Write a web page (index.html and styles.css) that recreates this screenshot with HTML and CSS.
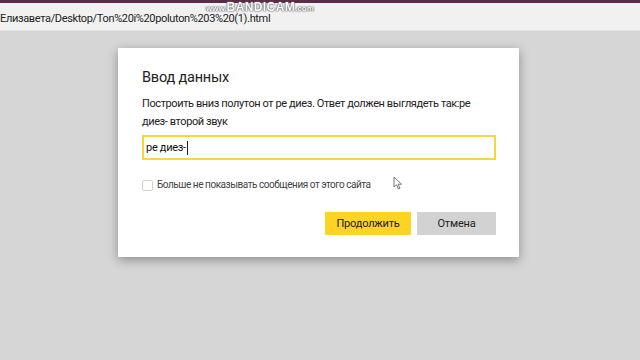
FILE: index.html
```html
<!DOCTYPE html>
<html lang="ru">
<head>
<meta charset="utf-8">
<link rel="stylesheet" href="styles.css">
</head>
<body>
<div class="topstrip"></div>
<div class="addressbar">
  <span class="url">Елизавета/Desktop/Ton%20i%20poluton%203%20(1).html</span>
  <div class="watermark">www.<span class="wm-big">BANDICAM</span>.com</div>
</div>
<main class="page">
  <div class="dialog">
    <h1 class="title">Ввод данных</h1>
    <p class="message">Построить вниз полутон от ре диез. Ответ должен выглядеть так:ре диез- второй звук</p>
    <div class="input">ре диез-<span class="caret"></span></div>
    <label class="check"><span class="box"></span>Больше не показывать сообщения от этого сайта</label>
    <div class="cursor">
      <svg width="10" height="14" viewBox="0 0 10 14"><path d="M1 1 L1 11 L3.5 8.8 L5.5 13 L7 12.3 L5 8.2 L8.5 8.2 Z" fill="#fff" stroke="#777" stroke-width="1"/></svg>
    </div>
    <div class="actions">
      <button class="btn primary">Продолжить</button>
      <button class="btn secondary">Отмена</button>
    </div>
  </div>
</main>
</body>
</html>
```
FILE: styles.css
```css
* { box-sizing: border-box; }
html, body { margin: 0; padding: 0; }
body {
  width: 640px;
  height: 360px;
  overflow: hidden;
  background: #d6d6d6;
  font-family: Roboto, "Noto Sans", sans-serif;
  color: #222;
}
.topstrip {
  height: 3px;
  background: #5b2c48;
}
.addressbar {
  position: relative;
  height: 28px;
  background: #f1f1f1;
  border-bottom: 1px solid #e4e4e4;
  display: flex;
  align-items: center;
}
.url {
  margin-left: 0;
  margin-top: 4px;
  font-size: 11px;
  line-height: 14px;
  letter-spacing: -0.35px;
  color: #222;
  white-space: nowrap;
}
.watermark {
  position: absolute;
  left: 206px;
  top: 0;
  font-family: "Liberation Sans", Arial, sans-serif;
  font-size: 8px;
  line-height: 9px;
  font-weight: 700;
  color: #fff;
  text-shadow: 0 0 1px #555, 0 0 1px #555, 0 0 2px #777;
}
.wm-big { font-size: 12px; font-weight: 900; letter-spacing: 0.4px; }
.page {
  padding: 17px 0 0 118px;
}
.dialog {
  position: relative;
  width: 401px;
  height: 209px;
  background: #fff;
  box-shadow: 0 3px 10px rgba(0,0,0,0.35);
  padding: 20px 23px 0 24px;
}
.title {
  margin: 0;
  font-size: 14.5px;
  font-weight: 400;
  line-height: 20px;
  letter-spacing: -0.2px;
  color: #222;
}
.message {
  margin: 7px 0 0;
  font-size: 11px;
  letter-spacing: -0.4px;
  line-height: 18px;
  color: #222;
}
.input {
  margin-top: 4px;
  height: 25px;
  border: 2px solid #f7d63f;
  font-size: 11px;
  letter-spacing: -0.3px;
  padding-left: 2px;
  display: flex;
  align-items: center;
  color: #111;
}
.caret {
  display: inline-block;
  width: 1px;
  height: 14px;
  background: #222;
  margin-left: 1px;
}
.check {
  display: flex;
  align-items: center;
  margin-top: 18px;
  font-size: 10px;
  letter-spacing: -0.45px;
  color: #444;
  line-height: 14px;
}
.box {
  width: 11px;
  height: 11px;
  border: 1px solid #d2d2d2;
  border-radius: 2px;
  margin-right: 4px;
  background: #fff;
}
.cursor {
  position: absolute;
  left: 275px;
  top: 128px;
  line-height: 0;
}
.actions {
  display: flex;
  justify-content: flex-end;
  gap: 6px;
  margin-top: 20px;
}
.btn {
  border: 0;
  height: 23px;
  font-family: inherit;
  font-size: 11px;
  letter-spacing: -0.2px;
  color: #222;
  padding: 0;
}
.primary { width: 86px; background: #fdd324; }
.secondary { width: 79px; background: #d2d2d2; }
```
